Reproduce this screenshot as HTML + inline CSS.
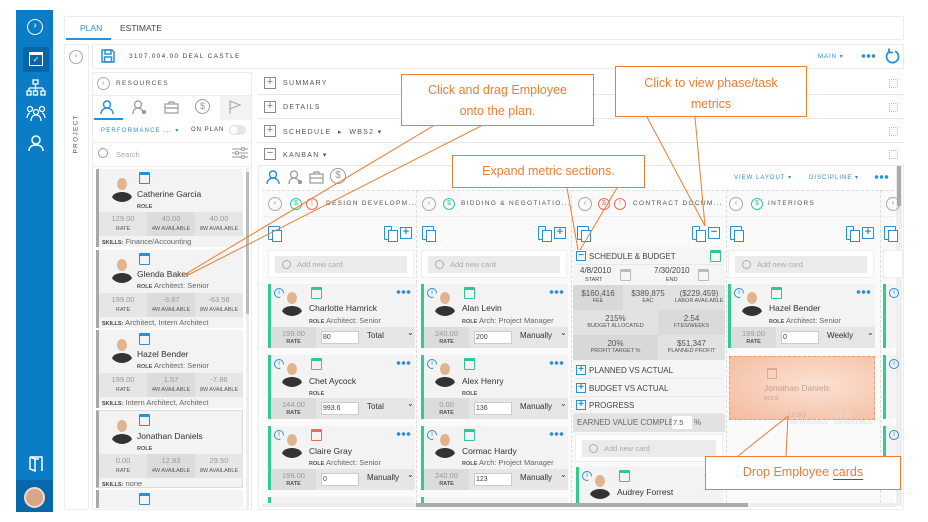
<!DOCTYPE html>
<html><head><meta charset="utf-8"><style>
*{box-sizing:border-box;margin:0;padding:0}
body{width:928px;height:522px;background:#fff;font-family:"Liberation Sans",sans-serif;color:#555;position:relative;overflow:hidden;font-size:8px}
.a{position:absolute}
.sb{left:16px;top:10px;width:37px;height:502px;background:#0b7dc6}
.pan{background:#fff;border:1px solid #ececec;border-radius:2px}
.cap{letter-spacing:1.3px;font-size:7px;color:#555}
.row{position:absolute;left:258px;width:646px;height:23px;border-bottom:1px solid #e6e6e6;background:#fff}
.row .pl{position:absolute;left:6px;top:5px;width:12px;height:12px;border:1px solid #888;font-size:11px;line-height:9px;text-align:center;color:#777}
.row .cap{position:absolute;left:25px;top:8px}
.row .ex{position:absolute;right:6px;top:7px;width:9px;height:9px;border:1px dotted #bbb}
.rc{position:absolute;left:96px;width:147px;height:78px;background:#f3f3f3;border-left:3px solid #a8a8a8}
.ph{position:absolute;width:26px;height:26px;border-radius:50%;overflow:hidden;background:#f3f3f3}
.ph:before{content:"";position:absolute;left:8px;top:2px;width:10px;height:12px;border-radius:50%;background:#e0b48f}
.ph:after{content:"";position:absolute;left:3px;top:16px;width:20px;height:12px;border-radius:50% 50% 0 0;background:#333}
.cal{position:absolute;width:11px;height:12px;border:1.5px solid #2a8fd6;border-top-width:3px;border-radius:1px}
.cal.g{border-color:#2ec79a}.cal.r{border-color:#ee6a55}
.nm{position:absolute;font-size:8.5px;color:#333}
.rl{position:absolute;font-size:7.5px;color:#666}
.rl b{font-size:5.5px;font-weight:bold;color:#555}
.st{position:absolute;left:0;top:43px;width:144px;height:24px;background:#e6e6e6;display:flex}
.st div{flex:1;text-align:center;font-size:7.5px;color:#999;padding-top:2px;line-height:10px}
.st div:nth-child(2){background:#dcdcdc}
.st i{display:block;font-style:normal;font-size:5.5px;color:#555}
.sk{position:absolute;left:3px;top:68px;font-size:7.5px;color:#666}
.sk b{font-size:5.5px;color:#444}
.kc{position:absolute;width:147px;height:64px;background:#f3f3f3;border-left:3px solid #2ecc8f}
.inf{position:absolute;left:3px;top:4px;width:10px;height:10px;border:1.3px solid #2a8fd6;border-radius:50%;font-size:7px;color:#2a8fd6;text-align:center;line-height:8px}
.dt,.dd{position:absolute;width:15px;height:4px;background:radial-gradient(circle,#2a8fd6 1.6px,transparent 2px) 0 0/5px 4px repeat-x}
.dt{right:4px;top:6px}
.ks{position:absolute;left:0;top:43px;width:144px;height:21px;background:#e6e6e6}
.ks .r{position:absolute;left:0;top:0;width:45px;height:21px;background:#dcdcdc;text-align:center;font-size:7.5px;color:#999;line-height:9px;padding-top:2px}
.ks .r i{display:block;font-style:normal;font-size:5.5px;color:#555;font-weight:bold}
.ks .in{position:absolute;left:50px;top:4px;width:38px;height:13px;background:#fff;border:1px solid #ccc;font-size:7px;color:#444;padding:2px 1px}
.ks .se{position:absolute;left:96px;top:4px;font-size:8px;color:#333}
.ks .se:after{content:"⌄";position:absolute;left:40px;top:-3px}
.cb{position:absolute;width:12px;height:12px;border:1.3px solid #aaa;border-radius:50%;font-size:8px;color:#999;line-height:9px;text-align:center}
.cs{position:absolute;width:12px;height:12px;border:1.3px solid;border-radius:50%;font-size:7px;line-height:9px;text-align:center}
.anc{position:absolute;height:28px;background:#fff;border:1px solid #eee}
.anc div{position:absolute;left:6px;top:5px;right:6px;height:17px;background:#ebebeb;font-size:7.5px;color:#aaa;padding:4px 0 0 22px}
.anc div:before{content:"";position:absolute;left:7px;top:4px;width:7px;height:7px;border:1px solid #aaa;border-radius:50%}
.bx{position:absolute;width:12px;height:12px;border:1.5px solid #2a8fd6;color:#2a8fd6;font-size:11px;line-height:8px;text-align:center;font-weight:bold}
.cp{position:absolute;width:12px;height:14px;border:1.5px solid #2a8fd6;border-radius:1px}
.cp:after{content:"";position:absolute;left:3px;top:3px;width:8px;height:10px;border:1.5px solid #2a8fd6;background:#fff}
.ms{position:absolute;left:575px;width:148px;height:17px;border-bottom:1px solid #e8e8e8;font-size:8px;color:#444;padding:4px 0 0 14px}
.ms .bx{left:1px;top:3px;width:10px;height:10px;font-size:10px;line-height:7px}
.call{position:absolute;border:1px solid #ed7d31;background:#fff;color:#ed7d31;font-size:12.5px;text-align:center;line-height:21px}
</style></head><body>

<!-- sidebar -->
<div class="a sb"></div>
<div class="a" style="left:16px;top:480px;width:37px;height:32px;background:#0868aa"></div>
<div class="a" style="left:27px;top:19px;width:16px;height:16px;border:1.5px solid #fff;border-radius:50%;color:#fff;font-size:10px;line-height:12px;text-align:center">›</div>
<div class="a" style="left:23px;top:47px;width:26px;height:25px;background:#0866a8;border-radius:2px"></div>
<div class="a" style="left:29px;top:52px;width:14px;height:14px;border:1.5px solid #fff;border-top-width:3px;color:#fff;font-size:8px;text-align:center;line-height:9px">✓</div>
<svg class="a" style="left:26px;top:79px" width="20" height="18" fill="none" stroke="#fff" stroke-width="1.3"><rect x="7" y="1" width="5" height="4"/><path d="M9.5 5v4M3 9h14M3 9v3M9.5 9v3M17 9v3"/><rect x="1" y="12" width="4" height="4"/><rect x="7.5" y="12" width="4" height="4"/><rect x="15" y="12" width="4" height="4"/></svg>
<svg class="a" style="left:26px;top:105px" width="20" height="16" fill="none" stroke="#fff" stroke-width="1.3"><circle cx="4" cy="4" r="2.5"/><circle cx="16" cy="4" r="2.5"/><circle cx="10" cy="7" r="2.5"/><path d="M1 13c0-3 2-5 3-5M19 13c0-3-2-5-3-5M5 16c0-4 2-6 5-6s5 2 5 6"/></svg>
<svg class="a" style="left:28px;top:135px" width="16" height="16" fill="none" stroke="#fff" stroke-width="1.5"><circle cx="8" cy="5" r="4"/><path d="M1 16c0-4 3-6 7-6s7 2 7 6"/></svg>
<svg class="a" style="left:29px;top:456px" width="14" height="16" fill="none" stroke="#fff" stroke-width="1.5"><path d="M1 1h12v14M1 1v12l5 2V3L1 1M6 3h4"/></svg>
<div class="a" style="left:24px;top:487px;width:21px;height:21px;border-radius:50%;background:#d9a58a;border:2px solid #f2d9cc"></div>

<!-- tabs -->
<div class="a pan" style="left:64px;top:16px;width:840px;height:24px"></div>
<div class="a" style="left:80px;top:23px;font-size:8.5px;color:#2a8fd6">PLAN</div>
<div class="a" style="left:120px;top:23px;font-size:8.5px;color:#444">ESTIMATE</div>
<div class="a" style="left:66px;top:38px;width:45px;height:1.5px;background:#2a8fd6"></div>

<!-- project bar -->
<div class="a pan" style="left:64px;top:44px;width:25px;height:466px"></div>
<div class="a cb" style="left:69px;top:50px;width:14px;height:14px">›</div>
<div class="a cap" style="left:46px;top:120px;transform:rotate(-90deg);width:60px;font-size:6.5px">PROJECT</div>

<!-- header -->
<div class="a pan" style="left:92px;top:44px;width:812px;height:25px"></div>
<svg class="a" style="left:101px;top:49px" width="14" height="14" fill="none" stroke="#2a8fd6" stroke-width="1.5"><path d="M1 1h10l2 2v10H1z"/><rect x="4" y="1" width="6" height="4"/><rect x="3.5" y="8" width="7" height="5"/></svg>
<div class="a cap" style="left:129px;top:53px;font-size:6.5px;color:#444">3107.004.00 DEAL CASTLE</div>
<div class="a cap" style="left:818px;top:53px;font-size:6px;color:#2a8fd6;letter-spacing:1px">MAIN ▾</div>
<div class="dd" style="left:861px;top:54px"></div>
<svg class="a" style="left:884px;top:48px" width="17" height="17" fill="none" stroke="#2a8fd6" stroke-width="1.8"><path d="M11 3.2A6 6 0 1 1 5.5 3.5"/><path d="M5 0.5v4h4"/></svg>

<!-- resources panel -->
<div class="a pan" style="left:92px;top:72px;width:160px;height:438px"></div>
<div class="a cb" style="left:97px;top:77px;width:13px;height:13px">‹</div>
<div class="a cap" style="left:116px;top:80px;font-size:6.5px">RESOURCES</div>
<div class="a" style="left:93px;top:95px;width:158px;height:1px;background:#eee"></div>
<svg class="a" style="left:100px;top:100px" width="14" height="14" fill="none" stroke="#2a8fd6" stroke-width="1.5"><circle cx="7" cy="4.5" r="3.5"/><path d="M1 14c0-4 3-6 6-6s6 2 6 6"/></svg>
<div class="a" style="left:94px;top:118px;width:29px;height:1.5px;background:#2a8fd6"></div>
<svg class="a" style="left:132px;top:100px" width="14" height="14" fill="none" stroke="#999" stroke-width="1.3"><circle cx="6" cy="4.5" r="3.5"/><path d="M1 14c0-4 2-6 5-6s5 2 5 6"/><circle cx="12" cy="12" r="1.5" fill="#999"/></svg>
<svg class="a" style="left:164px;top:101px" width="15" height="13" fill="none" stroke="#999" stroke-width="1.2"><rect x="1" y="3" width="13" height="9"/><path d="M5 3V1h5v2M1 7h13"/></svg>
<div class="a" style="left:195px;top:99px;width:15px;height:15px;border:1.2px solid #999;border-radius:50%;font-size:9px;color:#999;text-align:center;line-height:12px">$</div>
<div class="a" style="left:220px;top:96px;width:31px;height:24px;background:#f3f3f3"></div>
<svg class="a" style="left:229px;top:100px" width="12" height="14" fill="none" stroke="#aaa" stroke-width="1.2"><path d="M1 14V1l10 4-10 4"/></svg>
<div class="a cap" style="left:101px;top:127px;font-size:6px;color:#2a8fd6;letter-spacing:1.2px">PERFORMANCE ... ▾</div>
<div class="a cap" style="left:191px;top:127px;font-size:6px;color:#444;letter-spacing:1px">ON PLAN</div>
<div class="a" style="left:229px;top:125px;width:17px;height:10px;border-radius:5px;background:#e6e6e6"></div>
<div class="a" style="left:229px;top:125px;width:10px;height:10px;border-radius:50%;background:#fff;border:1px solid #ddd"></div>
<div class="a" style="left:93px;top:142px;width:158px;height:1px;background:#eee"></div>
<div class="a" style="left:98px;top:148px;width:10px;height:10px;border:1px solid #999;border-radius:50%"></div>
<div class="a" style="left:116px;top:150px;font-size:7.5px;color:#aaa">Search</div>
<svg class="a" style="left:232px;top:146px" width="16" height="14" stroke="#999" stroke-width="1" fill="#fff"><path d="M0 3h16M0 7h16M0 11h16"/><circle cx="11" cy="3" r="1.5"/><circle cx="5" cy="7" r="1.5"/><circle cx="11" cy="11" r="1.5"/></svg>
<div class="a" style="left:93px;top:166px;width:158px;height:1px;background:#eee"></div>
<div class="a" style="left:246px;top:168px;width:3px;height:342px;background:#eee"></div>
<div class="a" style="left:246px;top:172px;width:3px;height:142px;background:#bbb"></div>

<div class="rc" style="top:169px"><div class="ph" style="left:10px;top:7px"></div><div class="cal" style="left:40px;top:3px"></div><div class="nm" style="left:38px;top:20px">Catherine Garcia</div><div class="rl" style="left:38px;top:32px"><b>ROLE</b></div><div class="st"><div>129.00<i>RATE</i></div><div>40.00<i>4W AVAILABLE</i></div><div>40.00<i>8W AVAILABLE</i></div></div><div class="sk"><b>SKILLS:</b> Finance/Accounting</div></div>
<div class="rc" style="top:250px"><div class="ph" style="left:10px;top:7px"></div><div class="cal" style="left:40px;top:3px"></div><div class="nm" style="left:38px;top:19px">Glenda Baker</div><div class="rl" style="left:38px;top:31px"><b>ROLE</b> Architect: Senior</div><div class="st"><div>199.00<i>RATE</i></div><div>-3.67<i>4W AVAILABLE</i></div><div>-63.58<i>8W AVAILABLE</i></div></div><div class="sk"><b>SKILLS:</b> Architect, Intern Architect</div></div>
<div class="rc" style="top:330px"><div class="ph" style="left:10px;top:7px"></div><div class="cal" style="left:40px;top:3px"></div><div class="nm" style="left:38px;top:19px">Hazel Bender</div><div class="rl" style="left:38px;top:31px"><b>ROLE</b> Architect: Senior</div><div class="st"><div>199.00<i>RATE</i></div><div>1.57<i>4W AVAILABLE</i></div><div>-7.86<i>8W AVAILABLE</i></div></div><div class="sk"><b>SKILLS:</b> Intern Architect, Architect</div></div>
<div class="rc" style="top:410px;border:1px solid #ddd;border-left:3px solid #a8a8a8"><div class="ph" style="left:10px;top:7px"></div><div class="cal" style="left:40px;top:3px"></div><div class="nm" style="left:38px;top:20px">Jonathan Daniels</div><div class="rl" style="left:38px;top:32px"><b>ROLE</b></div><div class="st"><div>0.00<i>RATE</i></div><div>12.83<i>4W AVAILABLE</i></div><div>29.50<i>8W AVAILABLE</i></div></div><div class="sk"><b>SKILLS:</b> none</div></div>
<div class="rc" style="top:490px;height:18px"><div class="cal" style="left:40px;top:3px"></div></div>

<!-- main panel -->
<div class="a pan" style="left:258px;top:72px;width:646px;height:438px"></div>
<div class="row" style="top:72px"><div class="pl">+</div><div class="cap">SUMMARY</div><div class="ex"></div></div>
<div class="row" style="top:96px"><div class="pl">+</div><div class="cap">DETAILS</div><div class="ex"></div></div>
<div class="row" style="top:120px"><div class="pl">+</div><div class="cap">SCHEDULE &nbsp;▸&nbsp; WBS2 ▾</div><div class="ex"></div></div>
<div class="row" style="top:143px"><div class="pl">−</div><div class="cap">KANBAN ▾</div><div class="ex"></div></div>
<svg class="a" style="left:266px;top:170px" width="14" height="14" fill="none" stroke="#2a8fd6" stroke-width="1.5"><circle cx="7" cy="4.5" r="3.5"/><path d="M1 14c0-4 3-6 6-6s6 2 6 6"/></svg>
<svg class="a" style="left:288px;top:170px" width="14" height="14" fill="none" stroke="#999" stroke-width="1.3"><circle cx="6" cy="4.5" r="3.5"/><path d="M1 14c0-4 2-6 5-6s5 2 5 6"/><circle cx="12" cy="12" r="1.5" fill="#999"/></svg>
<svg class="a" style="left:309px;top:171px" width="15" height="13" fill="none" stroke="#999" stroke-width="1.2"><rect x="1" y="3" width="13" height="9"/><path d="M5 3V1h5v2M1 7h13"/></svg>
<div class="a" style="left:330px;top:168px;width:16px;height:16px;border:1.2px solid #999;border-radius:50%;font-size:10px;color:#999;text-align:center;line-height:13px">$</div>
<div class="a cap" style="left:734px;top:174px;font-size:6px;color:#2a8fd6;letter-spacing:1px">VIEW LAYOUT ▾</div>
<div class="a cap" style="left:809px;top:174px;font-size:6px;color:#2a8fd6;letter-spacing:1px">DISCIPLINE ▾</div>
<div class="dd" style="left:874px;top:175px"></div>
<div class="a" style="left:896px;top:166px;width:6px;height:340px;background:#eee"></div>
<div class="a" style="left:897px;top:166px;width:4px;height:40px;background:#aaa"></div>

<!-- column separators -->
<div class="a" style="left:262px;top:190px;width:632px;height:313px;background:#fafafa"></div>
<div class="a" style="left:416px;top:190px;width:0;height:313px;border-left:1px dashed #ddd"></div>
<div class="a" style="left:571px;top:190px;width:0;height:313px;border-left:1px dashed #ddd"></div>
<div class="a" style="left:726px;top:190px;width:0;height:313px;border-left:1px dashed #ddd"></div>
<div class="a" style="left:880px;top:190px;width:0;height:313px;border-left:1px dashed #ddd"></div>
<div class="a" style="left:262px;top:190px;width:632px;height:1px;border-top:1px dashed #ddd"></div>

<!-- col headers -->
<div class="a cb" style="left:268px;top:197px;width:14px;height:14px">‹</div>
<div class="a cs" style="left:290px;top:198px;color:#2ec79a;border-color:#2ec79a">$</div>
<div class="a cs" style="left:306px;top:198px;color:#ee6a55;border-color:#ee6a55">!</div>
<div class="a cap" style="left:326px;top:200px;font-size:6.5px">DESIGN DEVELOPM...</div>
<div class="a cb" style="left:422px;top:197px;width:14px;height:14px">‹</div>
<div class="a cs" style="left:443px;top:198px;color:#2ec79a;border-color:#2ec79a">$</div>
<div class="a cap" style="left:461px;top:200px;font-size:6.5px">BIDDING &amp; NEGOTIATIO...</div>
<div class="a cb" style="left:578px;top:197px;width:14px;height:14px">‹</div>
<div class="a cs" style="left:598px;top:198px;color:#ee6a55;border-color:#ee6a55">$</div>
<div class="a cs" style="left:614px;top:198px;color:#ee6a55;border-color:#ee6a55">!</div>
<div class="a cap" style="left:633px;top:200px;font-size:6.5px">CONTRACT DOCUM...</div>
<div class="a cb" style="left:729px;top:197px;width:14px;height:14px">‹</div>
<div class="a cs" style="left:751px;top:198px;color:#2ec79a;border-color:#2ec79a">$</div>
<div class="a cap" style="left:768px;top:200px;font-size:6.5px">INTERIORS</div>
<div class="a cb" style="left:886px;top:197px;width:14px;height:14px">‹</div>
<div class="a" style="left:262px;top:216px;width:632px;height:1px;background:#eee"></div>

<!-- toolbars -->
<div class="cp" style="left:268px;top:226px"></div><div class="cp" style="left:384px;top:226px;width:8px"></div><div class="bx" style="left:400px;top:227px">+</div>
<div class="cp" style="left:422px;top:226px"></div><div class="cp" style="left:538px;top:226px;width:8px"></div><div class="bx" style="left:554px;top:227px">+</div>
<div class="cp" style="left:577px;top:226px"></div><div class="cp" style="left:692px;top:226px;width:8px"></div><div class="bx" style="left:708px;top:227px">−</div>
<div class="cp" style="left:730px;top:226px"></div><div class="cp" style="left:846px;top:226px;width:8px"></div><div class="bx" style="left:862px;top:227px">+</div>
<div class="cp" style="left:884px;top:226px"></div>

<div class="anc" style="left:268px;top:250px;width:146px"><div>Add new card</div></div>
<div class="anc" style="left:421px;top:250px;width:146px"><div>Add new card</div></div>
<div class="anc" style="left:728px;top:250px;width:146px"><div>Add new card</div></div>
<div class="anc" style="left:883px;top:250px;width:20px"></div>

<!-- col1 cards -->
<div class="kc" style="left:268px;top:284px"><div class="inf">i</div><div class="ph" style="left:8px;top:6px"></div><div class="cal g" style="left:40px;top:3px"></div><div class="dt"></div><div class="nm" style="left:38px;top:19px">Charlotte Hamrick</div><div class="rl" style="left:38px;top:32px"><b>ROLE</b> Architect: Senior</div><div class="ks"><div class="r">199.00<i>RATE</i></div><div class="in">80</div><div class="se">Total</div></div></div>
<div class="kc" style="left:268px;top:355px"><div class="inf">i</div><div class="ph" style="left:8px;top:6px"></div><div class="cal g" style="left:40px;top:3px"></div><div class="dt"></div><div class="nm" style="left:38px;top:21px">Chet Aycock</div><div class="rl" style="left:38px;top:33px"><b>ROLE</b></div><div class="ks"><div class="r">144.00<i>RATE</i></div><div class="in">993.6</div><div class="se">Total</div></div></div>
<div class="kc" style="left:268px;top:426px"><div class="inf">i</div><div class="ph" style="left:8px;top:6px"></div><div class="cal r" style="left:40px;top:3px"></div><div class="dt"></div><div class="nm" style="left:38px;top:20px">Claire Gray</div><div class="rl" style="left:38px;top:32px"><b>ROLE</b> Architect: Senior</div><div class="ks"><div class="r">199.00<i>RATE</i></div><div class="in">0</div><div class="se">Manually</div></div></div>
<div class="kc" style="left:268px;top:497px;height:6px"></div>

<!-- col2 cards -->
<div class="kc" style="left:421px;top:284px"><div class="inf">i</div><div class="ph" style="left:8px;top:6px"></div><div class="cal g" style="left:40px;top:3px"></div><div class="dt"></div><div class="nm" style="left:38px;top:19px">Alan Levin</div><div class="rl" style="left:38px;top:32px"><b>ROLE</b> Arch: Project Manager</div><div class="ks"><div class="r">240.00<i>RATE</i></div><div class="in">200</div><div class="se">Manually</div></div></div>
<div class="kc" style="left:421px;top:355px"><div class="inf">i</div><div class="ph" style="left:8px;top:6px"></div><div class="cal g" style="left:40px;top:3px"></div><div class="dt"></div><div class="nm" style="left:38px;top:21px">Alex Henry</div><div class="rl" style="left:38px;top:33px"><b>ROLE</b></div><div class="ks"><div class="r">0.00<i>RATE</i></div><div class="in">136</div><div class="se">Manually</div></div></div>
<div class="kc" style="left:421px;top:426px"><div class="inf">i</div><div class="ph" style="left:8px;top:6px"></div><div class="cal g" style="left:40px;top:3px"></div><div class="dt"></div><div class="nm" style="left:38px;top:20px">Cormac Hardy</div><div class="rl" style="left:38px;top:32px"><b>ROLE</b> Arch: Project Manager</div><div class="ks"><div class="r">240.00<i>RATE</i></div><div class="in">123</div><div class="se">Manually</div></div></div>
<div class="kc" style="left:421px;top:497px;height:6px"></div>

<!-- col3 metrics -->
<div class="a" style="left:573px;top:247px;width:152px;height:186px;background:#f5f5f5"></div>
<div class="ms" style="top:248px"><div class="bx">−</div>SCHEDULE &amp; BUDGET</div>
<div class="cal g" style="left:710px;top:250px"></div>
<div class="a" style="left:580px;top:266px;font-size:8px;color:#444">4/8/2010</div>
<div class="a" style="left:585px;top:277px;font-size:5.5px;color:#444">START</div>
<div class="cal" style="left:620px;top:269px;border-color:#bbb"></div>
<div class="a" style="left:654px;top:266px;font-size:8px;color:#444">7/30/2010</div>
<div class="a" style="left:666px;top:277px;font-size:5.5px;color:#444">END</div>
<div class="cal" style="left:698px;top:269px;border-color:#bbb"></div>
<div class="a" style="left:573px;top:285px;width:152px;height:75px;background:#e2e2e2"></div>
<div class="a" style="left:573px;top:285px;width:50px;height:25px;background:#d8d8d8"></div>
<div class="a" style="left:658px;top:310px;width:67px;height:25px;background:#dadada"></div>
<div class="a" style="left:573px;top:335px;width:85px;height:25px;background:#d8d8d8"></div>
<div class="a" style="left:573px;top:289px;width:50px;text-align:center;font-size:8px;color:#555">$160,416<div style="font-size:5.5px">FEE</div></div>
<div class="a" style="left:623px;top:289px;width:50px;text-align:center;font-size:8px;color:#555">$389,875<div style="font-size:5.5px">EAC</div></div>
<div class="a" style="left:673px;top:289px;width:52px;text-align:center;font-size:8px;color:#555">($229,459)<div style="font-size:5.5px">LABOR AVAILABLE</div></div>
<div class="a" style="left:573px;top:314px;width:85px;text-align:center;font-size:8px;color:#555">215%<div style="font-size:5.5px">BUDGET ALLOCATED</div></div>
<div class="a" style="left:658px;top:314px;width:67px;text-align:center;font-size:8px;color:#555">2.54<div style="font-size:5.5px">FTES/WEEKS</div></div>
<div class="a" style="left:573px;top:339px;width:85px;text-align:center;font-size:8px;color:#555">20%<div style="font-size:5.5px">PROFIT TARGET %</div></div>
<div class="a" style="left:658px;top:339px;width:67px;text-align:center;font-size:8px;color:#555">$51,347<div style="font-size:5.5px">PLANNED PROFIT</div></div>
<div class="ms" style="top:362px"><div class="bx">+</div>PLANNED VS ACTUAL</div>
<div class="ms" style="top:380px"><div class="bx">+</div>BUDGET VS ACTUAL</div>
<div class="ms" style="top:397px"><div class="bx">+</div>PROGRESS</div>
<div class="a" style="left:573px;top:414px;width:152px;height:18px;background:#e2e2e2;font-size:8px;color:#666;padding:4px 0 0 4px">EARNED VALUE COMPLETE</div>
<div class="a" style="left:672px;top:416px;width:20px;height:13px;background:#fff;font-size:7.5px;color:#555;padding:2px 1px">7.5</div>
<div class="a" style="left:694px;top:418px;font-size:8px;color:#666">%</div>
<div class="anc" style="left:575px;top:434px;width:148px"><div>Add new card</div></div>
<div class="kc" style="left:576px;top:467px;height:36px"><div class="inf">i</div><div class="ph" style="left:8px;top:6px"></div><div class="cal g" style="left:40px;top:3px"></div><div class="dt"></div><div class="nm" style="left:38px;top:20px">Audrey Forrest</div></div>

<!-- col4 -->
<div class="kc" style="left:728px;top:284px"><div class="inf">i</div><div class="ph" style="left:8px;top:6px"></div><div class="cal g" style="left:40px;top:3px"></div><div class="dt"></div><div class="nm" style="left:38px;top:19px">Hazel Bender</div><div class="rl" style="left:38px;top:32px"><b>ROLE</b> Architect: Senior</div><div class="ks"><div class="r">199.00<i>RATE</i></div><div class="in">0</div><div class="se">Weekly</div></div></div>
<div class="a" style="left:729px;top:356px;width:146px;height:64px;background:radial-gradient(ellipse at 60% 45%,#fbe0d2,#f4b899);border:1px dashed #e59a74;opacity:.95"></div>
<div class="a" style="left:764px;top:383px;font-size:8.5px;color:#c9a08c">Jonathan Daniels</div>
<div class="a" style="left:764px;top:396px;font-size:5.5px;color:#c9a08c">ROLE</div>
<div class="a" style="left:767px;top:368px;width:10px;height:11px;border:1px solid #d9ab95;border-top-width:2px"></div>
<div class="a" style="left:787px;top:410px;font-size:7.5px;color:#d3b4a5">12.83</div>
<div class="a" style="left:834px;top:410px;font-size:7.5px;color:#ddd">29.50</div>
<div class="a" style="left:790px;top:420px;font-size:5.5px;color:#ddd">4W AVAILABLE &nbsp;&nbsp; 8W AVAILABLE</div>

<!-- col5 -->
<div class="kc" style="left:883px;top:284px;width:13px"><div class="inf">i</div></div>
<div class="kc" style="left:883px;top:355px;width:13px"><div class="inf">i</div></div>
<div class="kc" style="left:883px;top:426px;width:13px"><div class="inf">i</div></div>

<!-- h scrollbar -->
<div class="a" style="left:262px;top:503px;width:634px;height:4px;background:#eee"></div>
<div class="a" style="left:416px;top:503px;width:332px;height:4px;background:#aaa"></div>

<!-- callouts -->
<svg class="a" style="left:0;top:0" width="928" height="522" fill="none" stroke="#ed7d31" stroke-width="1">
<path d="M433 126L184 275M481 126L186 276"/>
<path d="M647 117L705 226M695 117L705 226"/>
<path d="M567 188L578 250M617 188L580 250"/>
<path d="M738 456L788 416M786 456L788 416"/>
</svg>
<div class="call" style="left:401px;top:74px;width:193px;height:52px;padding-top:5px">Click and drag Employee<br>onto the plan.</div>
<div class="call" style="left:615px;top:66px;width:192px;height:51px;padding-top:6px;overflow:hidden">Click to view phase/task<br>metrics</div>
<div class="call" style="left:452px;top:155px;width:193px;height:33px;padding-top:5px">Expand metric sections.</div>
<div class="call" style="left:705px;top:456px;width:196px;height:34px;padding-top:5px">Drop Employee <span style="border-bottom:1.5px solid #2255cc">cards</span></div>
</body></html>
